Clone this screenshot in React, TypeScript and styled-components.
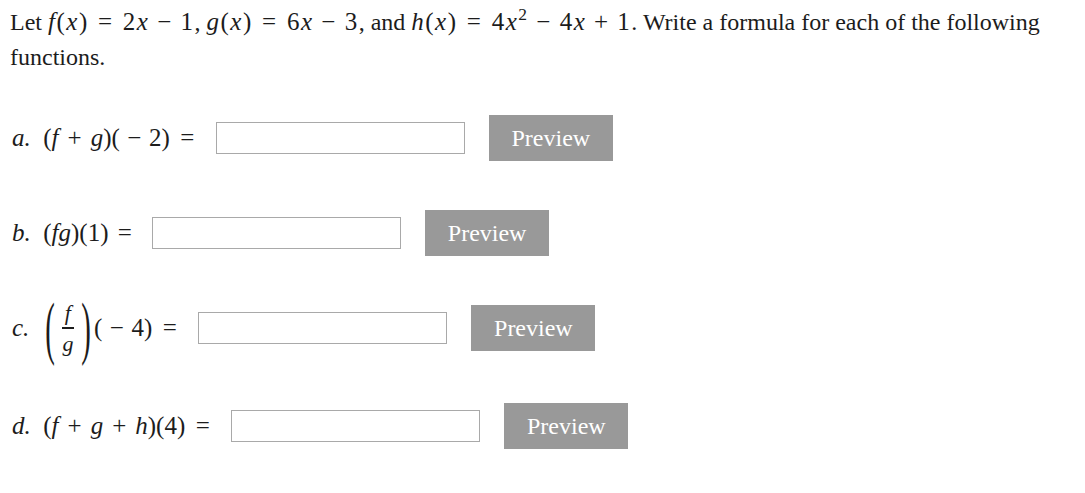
import React from "react";
import styled, { createGlobalStyle } from "styled-components";

const GlobalStyle = createGlobalStyle`
  body {
    margin: 0;
    background: #ffffff;
    font-family: "Liberation Serif", "Times New Roman", serif;
    color: #1c1c1c;
  }
`;

const Page = styled.div`
  padding: 4px 10px 0 10px;
`;

const Intro = styled.p`
  margin: 0;
  font-size: 24px;
  line-height: 35px;
`;

const Math = styled.span`
  font-size: 25px;
  letter-spacing: 0.06em;
`;

const Mi = styled.span`
  font-style: italic;
`;

// binary ops get a medium space, relations a thick one
const Op = styled.span<{ $rel?: boolean; $wide?: boolean }>`
  padding: 0
    ${(p) =>
      p.$wide ? (p.$rel ? "0.42em" : "0.36em") : p.$rel ? "0.37em" : "0.31em"};
`;

const Neg = styled.span`
  padding: 0 0.3em;
`;

const Sup = styled.sup`
  font-size: 0.7em;
  line-height: 0;
  vertical-align: 0.6em;
`;

const Row = styled.div<{ $top: number }>`
  display: flex;
  align-items: center;
  height: 46px;
  margin-top: ${(p) => p.$top}px;
  padding-left: 2px;
`;

const Label = styled.span`
  font-size: 25px;
  white-space: nowrap;
  display: inline-flex;
  align-items: center;
`;

const Item = styled.span`
  font-style: italic;
  margin-right: 0.5em;
`;

const AnswerInput = styled.input`
  box-sizing: border-box;
  width: 249px;
  height: 32px;
  margin-left: 11px;
  border: 1px solid #a9a9a9;
  background: #fff;
  outline: none;
  padding: 0 6px;
  font-size: 16px;
`;

const PreviewBtn = styled.button`
  box-sizing: border-box;
  width: 124px;
  height: 46px;
  margin-left: 24px;
  border: none;
  background: #999999;
  color: #ffffff;
  font-family: "Liberation Serif", "Times New Roman", serif;
  font-size: 24px;
  cursor: pointer;
`;

const BigParen = styled.span`
  display: inline-block;
  font-size: 36px;
  transform: scale(0.8, 1.95);
  line-height: 1;
  margin: 0 2px;
`;

const Frac = styled.span`
  display: inline-flex;
  flex-direction: column;
  align-items: center;
  margin: 0 4px;
  line-height: 1;
`;

const FracNum = styled.span`
  font-style: italic;
  font-size: 22px;
  padding: 0 3px 3px;
  border-bottom: 2px solid #1c1c1c;
`;

const FracDen = styled.span`
  font-style: italic;
  font-size: 22px;
  padding-top: 4px;
`;

export default function App() {
  return (
    <>
      <GlobalStyle />
      <Page>
        <Intro>
          Let{" "}
          <Math>
            <Mi>f</Mi>(<Mi>x</Mi>)<Op $rel>=</Op>2<Mi>x</Mi>
            <Op>−</Op>1
          </Math>
          ,{" "}
          <Math>
            <Mi>g</Mi>(<Mi>x</Mi>)<Op $rel>=</Op>6<Mi>x</Mi>
            <Op>−</Op>3
          </Math>
          , and{" "}
          <Math>
            <Mi>h</Mi>(<Mi>x</Mi>)<Op $rel>=</Op>4<Mi>x</Mi>
            <Sup>2</Sup>
            <Op>−</Op>4<Mi>x</Mi>
            <Op>+</Op>1
          </Math>
          . Write a formula for each of the following functions.
        </Intro>

        <Row $top={40}>
          <Label>
            <Item>a.</Item>(<Mi>f</Mi>
            <Op $wide>+</Op>
            <Mi>g</Mi>)(<Neg>−</Neg>2)<Op $rel $wide>=</Op>
          </Label>
          <AnswerInput type="text" />
          <PreviewBtn>Preview</PreviewBtn>
        </Row>

        <Row $top={49}>
          <Label>
            <Item>b.</Item>(<Mi>f</Mi>
            <Mi>g</Mi>)(1)<Op $rel>=</Op>
          </Label>
          <AnswerInput type="text" />
          <PreviewBtn>Preview</PreviewBtn>
        </Row>

        <Row $top={49}>
          <Label>
            <Item>c.</Item>
            <BigParen>(</BigParen>
            <Frac>
              <FracNum>f</FracNum>
              <FracDen>g</FracDen>
            </Frac>
            <BigParen>)</BigParen>(<Neg>−</Neg>4)<Op $rel $wide>=</Op>
          </Label>
          <AnswerInput type="text" />
          <PreviewBtn>Preview</PreviewBtn>
        </Row>

        <Row $top={52}>
          <Label>
            <Item>d.</Item>(<Mi>f</Mi>
            <Op $wide>+</Op>
            <Mi>g</Mi>
            <Op $wide>+</Op>
            <Mi>h</Mi>)(4)<Op $rel $wide>=</Op>
          </Label>
          <AnswerInput type="text" />
          <PreviewBtn>Preview</PreviewBtn>
        </Row>
      </Page>
    </>
  );
}
